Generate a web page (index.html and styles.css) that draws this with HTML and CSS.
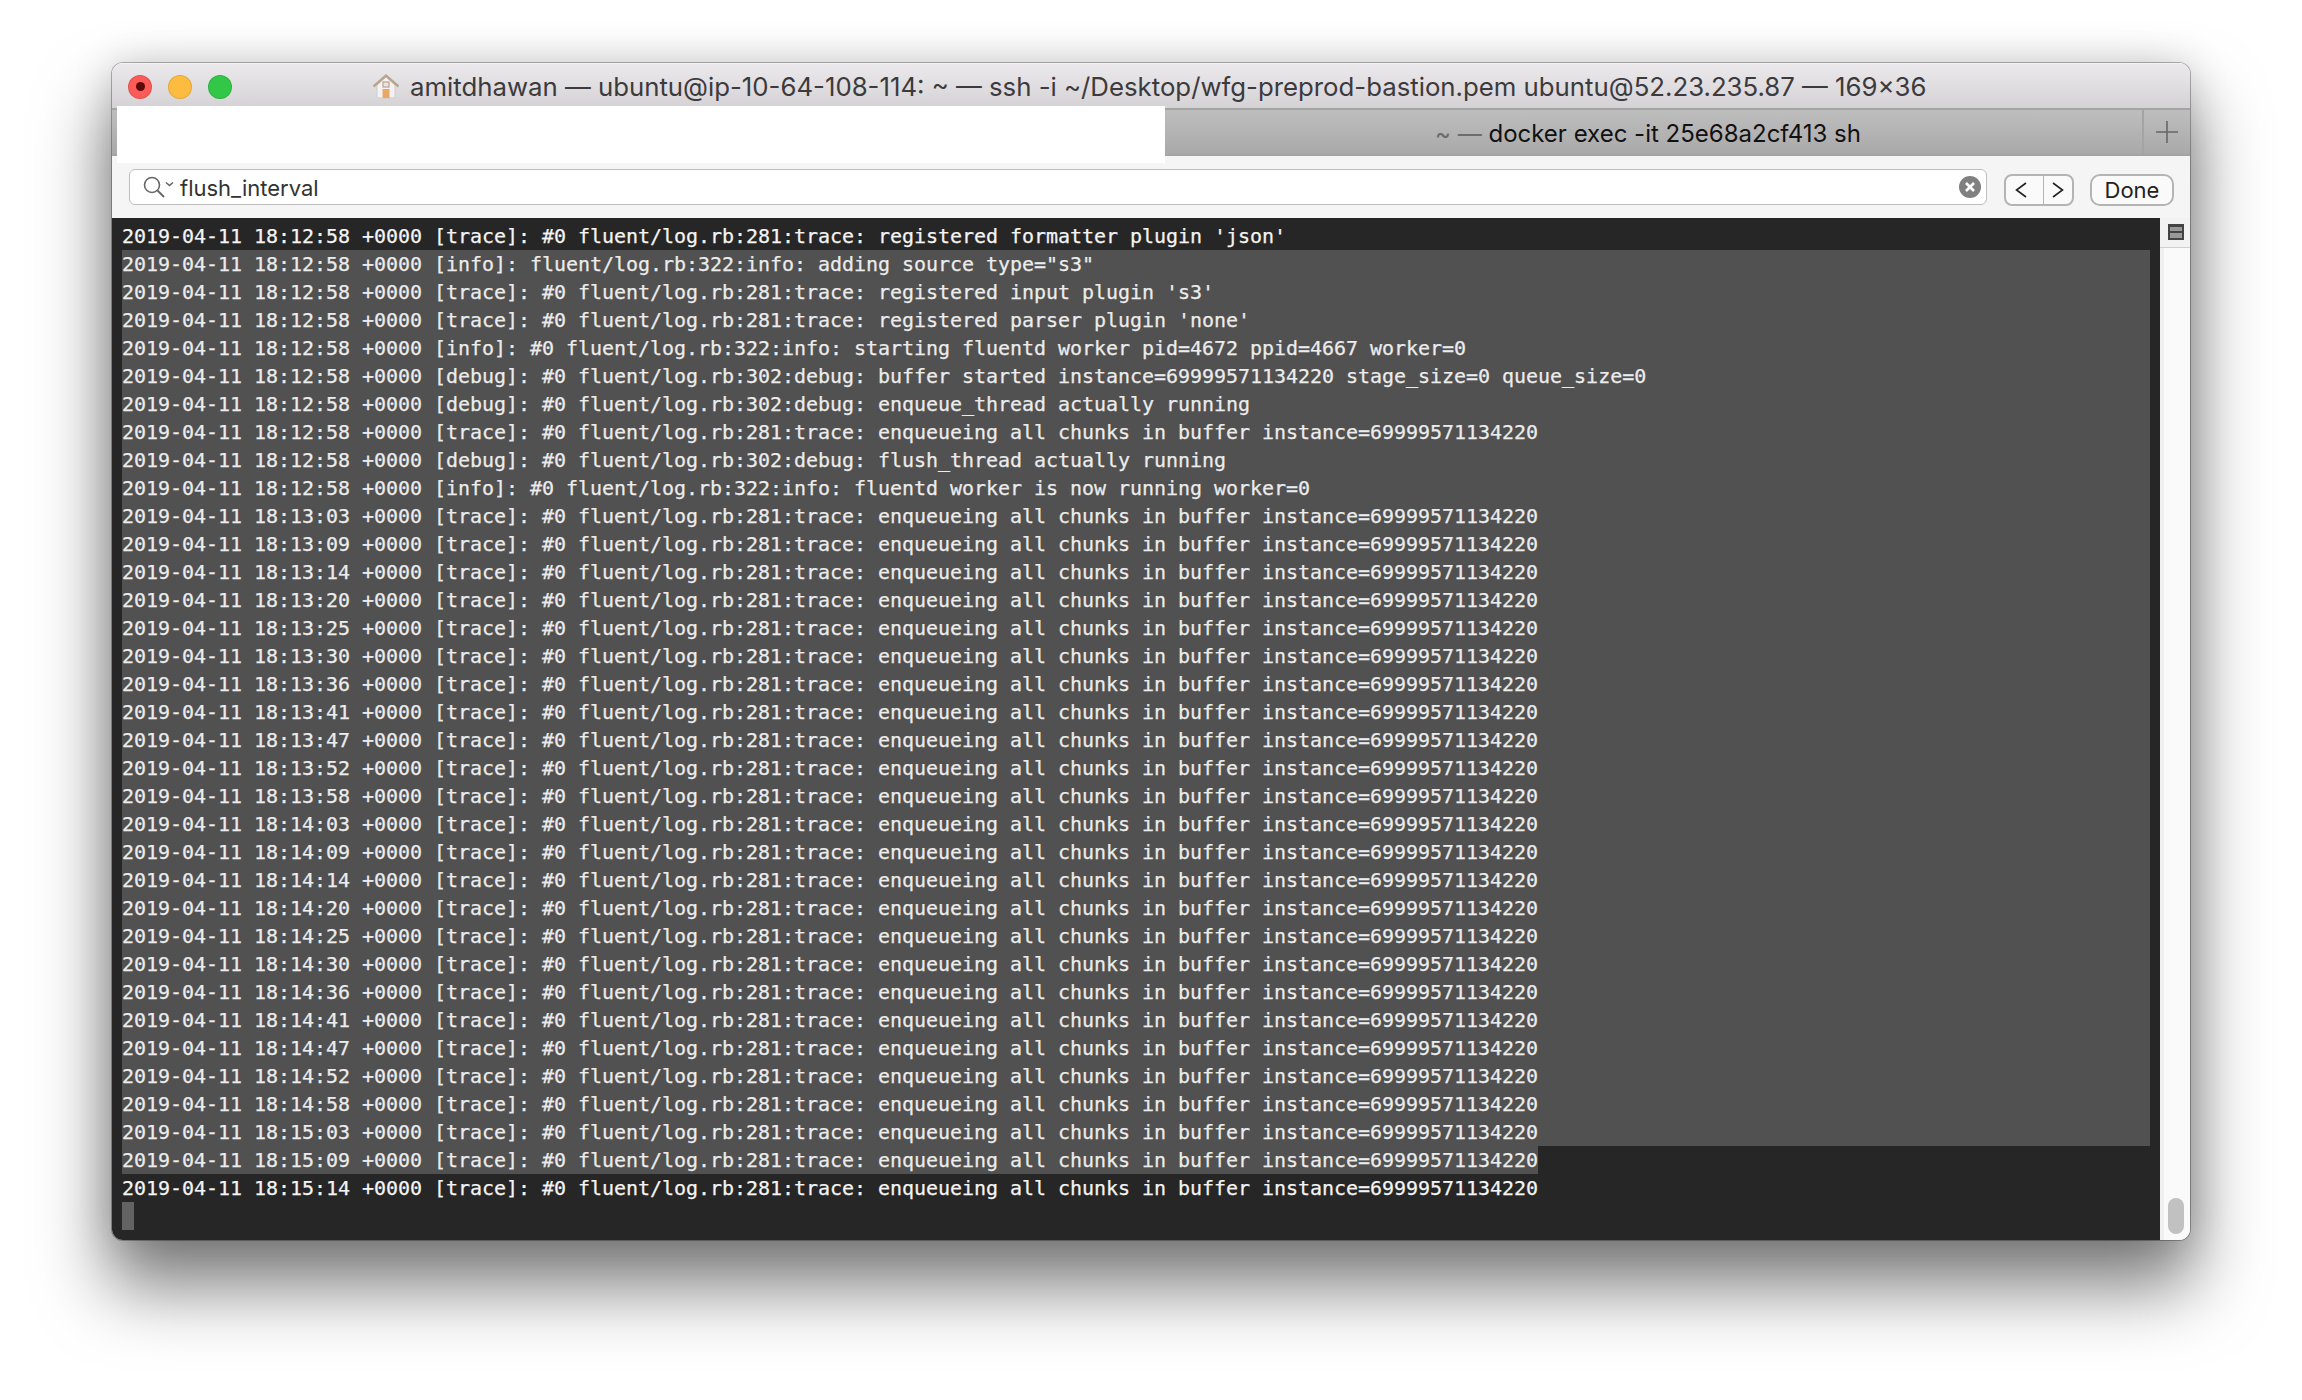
FILE: index.html
```html
<!DOCTYPE html>
<html lang="en">
<head>
<meta charset="utf-8">
<title>Terminal</title>
<link rel="stylesheet" href="styles.css">
</head>
<body>
<div class="window">
  <header class="titlebar">
    <div class="lights">
      <span class="light red"></span>
      <span class="light yellow"></span>
      <span class="light green"></span>
    </div>
    <div class="title">
      <svg class="house" width="28" height="26" viewBox="0 0 28 26">
        <path d="M5 12V25H23V12L14 4Z" fill="#f4f2f0" stroke="#cfcccc" stroke-width="1"/>
        <path d="M1.5 13.5L14 2.5L26.5 13.5" fill="none" stroke="#b9a48f" stroke-width="2.4"/>
        <rect x="11" y="9" width="6" height="5" fill="#e8e4e0" stroke="#b9a48f" stroke-width="1.2"/>
        <rect x="10.5" y="16" width="7" height="9" fill="#e9a868"/>
      </svg>
      <span>amitdhawan — ubuntu@ip-10-64-108-114: ~ — ssh -i ~/Desktop/wfg-preprod-bastion.pem ubuntu@52.23.235.87 — 169×36</span>
    </div>
  </header>
  <nav class="tabbar">
    <div class="tab-active"></div>
    <div class="tab"><span class="tab-dim">~ — </span>docker exec -it 25e68a2cf413 sh</div>
    <div class="tab-add">
      <svg width="24" height="24" viewBox="0 0 24 24"><path d="M12 1V23M1 12H23" stroke="#666" stroke-width="1.6"/></svg>
    </div>
  </nav>
  <div class="findbar">
    <div class="search">
      <svg class="search-icon" width="32" height="24" viewBox="0 0 32 24">
        <circle cx="10" cy="10" r="7.5" fill="none" stroke="#666" stroke-width="1.6"/>
        <path d="M15.5 15.5L22 22" stroke="#666" stroke-width="1.8"/>
        <path d="M24 7.5L27.5 10.5L31 7.5" fill="none" stroke="#666" stroke-width="1.6"/>
      </svg>
      <span class="search-text">flush_interval</span>
      <svg class="search-clear" width="22" height="22" viewBox="0 0 22 22">
        <circle cx="11" cy="11" r="11" fill="#808080"/>
        <path d="M7 7L15 15M15 7L7 15" stroke="#fff" stroke-width="2.6"/>
      </svg>
    </div>
    <div class="stepper">
      <span class="step step-prev"><svg width="12" height="16" viewBox="0 0 12 16"><path d="M11 1L1.5 8L11 15" fill="none" stroke="#222" stroke-width="1.6"/></svg></span>
      <span class="step"><svg width="12" height="16" viewBox="0 0 12 16"><path d="M1 1L10.5 8L1 15" fill="none" stroke="#222" stroke-width="1.6"/></svg></span>
    </div>
    <button class="done">Done</button>
  </div>
  <main class="content">
    <div class="terminal">
      <div class="line">2019-04-11 18:12:58 +0000 [trace]: #0 fluent/log.rb:281:trace: registered formatter plugin 'json'</div>
      <div class="line sel">2019-04-11 18:12:58 +0000 [info]: fluent/log.rb:322:info: adding source type="s3"</div>
      <div class="line sel">2019-04-11 18:12:58 +0000 [trace]: #0 fluent/log.rb:281:trace: registered input plugin 's3'</div>
      <div class="line sel">2019-04-11 18:12:58 +0000 [trace]: #0 fluent/log.rb:281:trace: registered parser plugin 'none'</div>
      <div class="line sel">2019-04-11 18:12:58 +0000 [info]: #0 fluent/log.rb:322:info: starting fluentd worker pid=4672 ppid=4667 worker=0</div>
      <div class="line sel">2019-04-11 18:12:58 +0000 [debug]: #0 fluent/log.rb:302:debug: buffer started instance=69999571134220 stage_size=0 queue_size=0</div>
      <div class="line sel">2019-04-11 18:12:58 +0000 [debug]: #0 fluent/log.rb:302:debug: enqueue_thread actually running</div>
      <div class="line sel">2019-04-11 18:12:58 +0000 [trace]: #0 fluent/log.rb:281:trace: enqueueing all chunks in buffer instance=69999571134220</div>
      <div class="line sel">2019-04-11 18:12:58 +0000 [debug]: #0 fluent/log.rb:302:debug: flush_thread actually running</div>
      <div class="line sel">2019-04-11 18:12:58 +0000 [info]: #0 fluent/log.rb:322:info: fluentd worker is now running worker=0</div>
      <div class="line sel">2019-04-11 18:13:03 +0000 [trace]: #0 fluent/log.rb:281:trace: enqueueing all chunks in buffer instance=69999571134220</div>
      <div class="line sel">2019-04-11 18:13:09 +0000 [trace]: #0 fluent/log.rb:281:trace: enqueueing all chunks in buffer instance=69999571134220</div>
      <div class="line sel">2019-04-11 18:13:14 +0000 [trace]: #0 fluent/log.rb:281:trace: enqueueing all chunks in buffer instance=69999571134220</div>
      <div class="line sel">2019-04-11 18:13:20 +0000 [trace]: #0 fluent/log.rb:281:trace: enqueueing all chunks in buffer instance=69999571134220</div>
      <div class="line sel">2019-04-11 18:13:25 +0000 [trace]: #0 fluent/log.rb:281:trace: enqueueing all chunks in buffer instance=69999571134220</div>
      <div class="line sel">2019-04-11 18:13:30 +0000 [trace]: #0 fluent/log.rb:281:trace: enqueueing all chunks in buffer instance=69999571134220</div>
      <div class="line sel">2019-04-11 18:13:36 +0000 [trace]: #0 fluent/log.rb:281:trace: enqueueing all chunks in buffer instance=69999571134220</div>
      <div class="line sel">2019-04-11 18:13:41 +0000 [trace]: #0 fluent/log.rb:281:trace: enqueueing all chunks in buffer instance=69999571134220</div>
      <div class="line sel">2019-04-11 18:13:47 +0000 [trace]: #0 fluent/log.rb:281:trace: enqueueing all chunks in buffer instance=69999571134220</div>
      <div class="line sel">2019-04-11 18:13:52 +0000 [trace]: #0 fluent/log.rb:281:trace: enqueueing all chunks in buffer instance=69999571134220</div>
      <div class="line sel">2019-04-11 18:13:58 +0000 [trace]: #0 fluent/log.rb:281:trace: enqueueing all chunks in buffer instance=69999571134220</div>
      <div class="line sel">2019-04-11 18:14:03 +0000 [trace]: #0 fluent/log.rb:281:trace: enqueueing all chunks in buffer instance=69999571134220</div>
      <div class="line sel">2019-04-11 18:14:09 +0000 [trace]: #0 fluent/log.rb:281:trace: enqueueing all chunks in buffer instance=69999571134220</div>
      <div class="line sel">2019-04-11 18:14:14 +0000 [trace]: #0 fluent/log.rb:281:trace: enqueueing all chunks in buffer instance=69999571134220</div>
      <div class="line sel">2019-04-11 18:14:20 +0000 [trace]: #0 fluent/log.rb:281:trace: enqueueing all chunks in buffer instance=69999571134220</div>
      <div class="line sel">2019-04-11 18:14:25 +0000 [trace]: #0 fluent/log.rb:281:trace: enqueueing all chunks in buffer instance=69999571134220</div>
      <div class="line sel">2019-04-11 18:14:30 +0000 [trace]: #0 fluent/log.rb:281:trace: enqueueing all chunks in buffer instance=69999571134220</div>
      <div class="line sel">2019-04-11 18:14:36 +0000 [trace]: #0 fluent/log.rb:281:trace: enqueueing all chunks in buffer instance=69999571134220</div>
      <div class="line sel">2019-04-11 18:14:41 +0000 [trace]: #0 fluent/log.rb:281:trace: enqueueing all chunks in buffer instance=69999571134220</div>
      <div class="line sel">2019-04-11 18:14:47 +0000 [trace]: #0 fluent/log.rb:281:trace: enqueueing all chunks in buffer instance=69999571134220</div>
      <div class="line sel">2019-04-11 18:14:52 +0000 [trace]: #0 fluent/log.rb:281:trace: enqueueing all chunks in buffer instance=69999571134220</div>
      <div class="line sel">2019-04-11 18:14:58 +0000 [trace]: #0 fluent/log.rb:281:trace: enqueueing all chunks in buffer instance=69999571134220</div>
      <div class="line sel">2019-04-11 18:15:03 +0000 [trace]: #0 fluent/log.rb:281:trace: enqueueing all chunks in buffer instance=69999571134220</div>
      <div class="line"><span class="sel-part">2019-04-11 18:15:09 +0000 [trace]: #0 fluent/log.rb:281:trace: enqueueing all chunks in buffer instance=69999571134220</span></div>
      <div class="line">2019-04-11 18:15:14 +0000 [trace]: #0 fluent/log.rb:281:trace: enqueueing all chunks in buffer instance=69999571134220</div>
      <div class="line"><span class="cursor"></span></div>
    </div>
    <aside class="scroll">
      <div class="split">
        <svg width="16" height="16" viewBox="0 0 16 16">
          <rect width="16" height="16" fill="#444"/>
          <rect x="2" y="3" width="12" height="4" fill="#999"/>
          <rect x="2" y="9" width="12" height="5" fill="#999"/>
        </svg>
      </div>
      <div class="thumb"></div>
    </aside>
  </main>
</div>
</body>
</html>
```
FILE: styles.css
```css
* { box-sizing: border-box; }
html, body { margin: 0; height: 100%; }
body {
  background: #fff;
  padding: 63px 0 0 112px;
  overflow: hidden;
  font-family: Inter, "Liberation Sans", Arial, sans-serif;
}
.window {
  width: 2078px;
  height: 1177px;
  display: flex;
  flex-direction: column;
  border-radius: 11px;
  overflow: hidden;
  position: relative;
}
body::before {
  content: "";
  position: absolute;
  left: 112px;
  top: 63px;
  width: 2078px;
  height: 1177px;
  border-radius: 11px;
  box-shadow: 0 0 0 1px rgba(0,0,0,.28), 0 44px 70px 4px rgba(0,0,0,.5), 0 0 40px rgba(0,0,0,.16);
}
.titlebar {
  height: 45px;
  flex: none;
  display: flex;
  align-items: center;
  position: relative;
  background: linear-gradient(#ebe9eb, #d4d2d4);
  border-top: 1px solid #f4f3f4;
}
.lights {
  display: flex;
  gap: 16px;
  margin-left: 16px;
  margin-top: 1px;
}
.light {
  width: 24px;
  height: 24px;
  border-radius: 50%;
  border: 1px solid rgba(0,0,0,.1);
  display: flex;
  align-items: center;
  justify-content: center;
}
.red { background: #fc5b57; }
.red::after {
  content: "";
  width: 9px;
  height: 9px;
  border-radius: 50%;
  background: #5a0a08;
}
.yellow { background: #fdbc40; }
.green { background: #33c748; }
.title {
  display: flex;
  align-items: center;
  gap: 10px;
  margin-left: 140px;
  font-size: 25.77px;
  color: #3c3a3c;
  white-space: nowrap;
}
.house { flex: none; }
.tabbar {
  height: 48px;
  flex: none;
  display: flex;
  border-top: 2px solid #a5a4a5;
  border-bottom: 2px solid #a5a4a5;
  background: linear-gradient(#bfbebf, #aaa9aa);
  padding-left: 1053px;
}
.tab-active {
  position: absolute;
  left: 5px;
  top: 43px;
  width: 1048px;
  height: 57px;
  background: #fff;
}
.tab {
  flex: 1;
  display: flex;
  align-items: center;
  justify-content: center;
  white-space: pre;
  font-size: 24px;
  color: #111;
  padding: 2px 11px 0 0;
}
.tab-dim { color: #6d6c6d; }
.tab-add {
  width: 48px;
  flex: none;
  display: flex;
  align-items: center;
  justify-content: center;
  border-left: 2px solid #a5a4a5;
}
.findbar {
  height: 62px;
  flex: none;
  display: flex;
  align-items: flex-start;
  background: #f5f5f5;
  padding: 13px 16px 0 17px;
}
.search {
  width: 1858px;
  height: 36px;
  flex: none;
  display: flex;
  align-items: center;
  background: #fff;
  border: 1px solid #bdbdbd;
  border-radius: 6px;
  padding: 0 5px 0 12px;
}
.search-icon { flex: none; }
.search-text {
  flex: 1;
  margin-left: 6px;
  padding-top: 1px;
  font-size: 22px;
  color: #333;
}
.search-clear { flex: none; }
.stepper {
  display: flex;
  width: 70px;
  height: 32px;
  margin: 5px 0 0 17px;
  flex: none;
  background: #fafafa;
  border: 2px solid #b4b4b4;
  border-radius: 8px;
}
.step {
  flex: 1;
  display: flex;
  align-items: center;
  justify-content: center;
}
.step-prev { border-right: 1px solid #b4b4b4; flex: 1.1; padding-right: 7px; }
.done {
  width: 84px;
  height: 32px;
  margin: 5px 0 0 16px;
  flex: none;
  padding: 0;
  background: #fafafa;
  border: 2px solid #b4b4b4;
  border-radius: 10px;
  font-family: Inter, "Liberation Sans", Arial, sans-serif;
  font-size: 22px;
  color: #222;
}
.content {
  flex: 1;
  min-height: 0;
  display: flex;
}
.terminal {
  flex: 1;
  min-width: 0;
  background: #262626;
  padding: 4px 10px 0;
  font-family: "DejaVu Sans Mono", monospace;
  font-size: 20px;
  letter-spacing: -0.04px;
  -webkit-text-stroke: 0.25px currentColor;
  color: #f4f4f4;
}
.line {
  height: 28px;
  line-height: 28px;
  white-space: pre;
}
.sel { background: #515151; color: #ececec; }
.sel-part { display: inline-block; background: #515151; color: #ececec; }
.cursor {
  display: block;
  width: 12px;
  height: 28px;
  background: #636363;
}
.scroll {
  width: 30px;
  flex: none;
  display: flex;
  flex-direction: column;
  align-items: stretch;
  background: #fafafa;
  border-left: 4px solid #f0f0f0;
}
.split {
  height: 30px;
  background: #f2f2f2;
  border-bottom: 1px solid #cfcfcf;
  margin-left: -4px;
  padding: 6px 0 0 8px;
}
.split svg { display: block; }
.thumb {
  width: 16px;
  height: 36px;
  margin: auto 0 6px 4px;
  border-radius: 8px;
  background: #c1c1c1;
}
```
